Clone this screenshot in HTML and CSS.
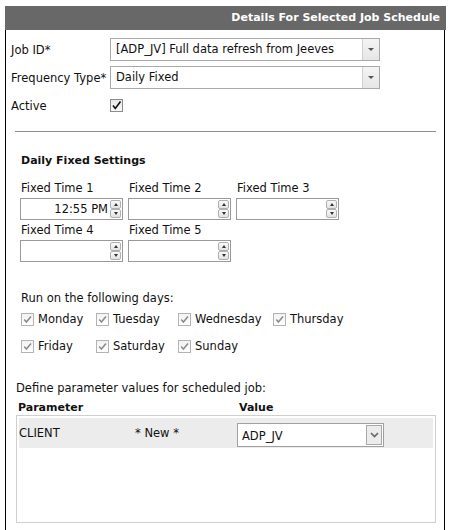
FILE: index.html
```html
<!DOCTYPE html>
<html>
<head>
<meta charset="utf-8">
<link rel="stylesheet" href="styles.css">
</head>
<body>
<div class="panel">
  <div class="panel-head">Details For Selected Job Schedule</div>
  <div class="panel-body">
    <div class="form-row">
      <span class="label">Job ID*</span>
      <div class="combo">
        <span class="combo-text">[ADP_JV] Full data refresh from Jeeves</span>
        <span class="combo-btn"><span class="tri"></span></span>
      </div>
    </div>
    <div class="form-row">
      <span class="label">Frequency Type*</span>
      <div class="combo">
        <span class="combo-text">Daily Fixed</span>
        <span class="combo-btn"><span class="tri"></span></span>
      </div>
    </div>
    <div class="form-row active-row">
      <span class="label">Active</span>
      <span class="cb cb-dark"><svg width="11" height="11" viewBox="0 0 11 11"><path d="M2 5.5 L4.3 8.5 L9.5 1.5" fill="none" stroke="#111" stroke-width="1.6"/></svg></span>
    </div>
    <div class="divider"></div>

    <div class="settings">
      <div class="section-title">Daily Fixed Settings</div>
      <div class="times">
        <div class="time">
          <div class="time-label">Fixed Time 1</div>
          <div class="spin"><span class="spin-val">12:55 PM</span><span class="spin-btns"><span class="sb"><span class="up"></span></span><span class="sb"><span class="down"></span></span></span></div>
        </div>
        <div class="time">
          <div class="time-label">Fixed Time 2</div>
          <div class="spin"><span class="spin-val"></span><span class="spin-btns"><span class="sb"><span class="up"></span></span><span class="sb"><span class="down"></span></span></span></div>
        </div>
        <div class="time">
          <div class="time-label">Fixed Time 3</div>
          <div class="spin"><span class="spin-val"></span><span class="spin-btns"><span class="sb"><span class="up"></span></span><span class="sb"><span class="down"></span></span></span></div>
        </div>
        <div class="time">
          <div class="time-label">Fixed Time 4</div>
          <div class="spin"><span class="spin-val"></span><span class="spin-btns"><span class="sb"><span class="up"></span></span><span class="sb"><span class="down"></span></span></span></div>
        </div>
        <div class="time">
          <div class="time-label">Fixed Time 5</div>
          <div class="spin"><span class="spin-val"></span><span class="spin-btns"><span class="sb"><span class="up"></span></span><span class="sb"><span class="down"></span></span></span></div>
        </div>
      </div>

      <div class="days-title">Run on the following days:</div>
      <div class="days">
        <div class="day w1"><span class="cb cb-light"><svg width="11" height="11" viewBox="0 0 11 11"><path d="M2.2 5.6 L4.4 8 L9 2.5" fill="none" stroke="#8a8a8a" stroke-width="1.5"/></svg></span>Monday</div>
        <div class="day w2"><span class="cb cb-light"><svg width="11" height="11" viewBox="0 0 11 11"><path d="M2.2 5.6 L4.4 8 L9 2.5" fill="none" stroke="#8a8a8a" stroke-width="1.5"/></svg></span>Tuesday</div>
        <div class="day w3"><span class="cb cb-light"><svg width="11" height="11" viewBox="0 0 11 11"><path d="M2.2 5.6 L4.4 8 L9 2.5" fill="none" stroke="#8a8a8a" stroke-width="1.5"/></svg></span>Wednesday</div>
        <div class="day"><span class="cb cb-light"><svg width="11" height="11" viewBox="0 0 11 11"><path d="M2.2 5.6 L4.4 8 L9 2.5" fill="none" stroke="#8a8a8a" stroke-width="1.5"/></svg></span>Thursday</div>
      </div>
      <div class="days">
        <div class="day w1"><span class="cb cb-light"><svg width="11" height="11" viewBox="0 0 11 11"><path d="M2.2 5.6 L4.4 8 L9 2.5" fill="none" stroke="#8a8a8a" stroke-width="1.5"/></svg></span>Friday</div>
        <div class="day w2"><span class="cb cb-light"><svg width="11" height="11" viewBox="0 0 11 11"><path d="M2.2 5.6 L4.4 8 L9 2.5" fill="none" stroke="#8a8a8a" stroke-width="1.5"/></svg></span>Saturday</div>
        <div class="day w3"><span class="cb cb-light"><svg width="11" height="11" viewBox="0 0 11 11"><path d="M2.2 5.6 L4.4 8 L9 2.5" fill="none" stroke="#8a8a8a" stroke-width="1.5"/></svg></span>Sunday</div>
      </div>
    </div>

    <div class="params-title">Define parameter values for scheduled job:</div>
    <div class="params-head">
      <span class="ph-param">Parameter</span>
      <span class="ph-value">Value</span>
    </div>
    <div class="params-box">
      <div class="param-row">
        <span class="pr-name">CLIENT</span>
        <span class="pr-new">* New *</span>
        <div class="vsel">
          <span class="vsel-text">ADP_JV</span>
          <span class="vsel-btn"><svg width="9" height="6" viewBox="0 0 9 6"><path d="M1 1 L4.5 4.5 L8 1" fill="none" stroke="#666" stroke-width="1.6"/></svg></span>
        </div>
      </div>
    </div>
  </div>
</div>
</body>
</html>
```
FILE: styles.css
```css
html, body {
  margin: 0;
  padding: 0;
  background: #fff;
}
body {
  font-family: "DejaVu Sans", Verdana, sans-serif;
  font-size: 11.5px;
  color: #111;
}
.panel {
  margin: 6px 0 0 5px;
  width: 441px;
}
.panel-head {
  height: 24px;
  background: #686868;
  color: #fff;
  font-weight: bold;
  font-size: 11px;
  text-align: right;
  padding-right: 6px;
  line-height: 24px;
}
.panel-body {
  border-left: 1px solid #000;
  border-right: 1px solid #000;
  height: 500px;
  padding: 8px 0 0 0;
  box-sizing: border-box;
  width: 440px;
}
.form-row {
  display: flex;
  align-items: center;
  height: 23px;
  margin-bottom: 5px;
}
.label {
  width: 99px;
  padding-left: 5px;
  flex: none;
}
.combo {
  width: 270px;
  height: 23px;
  box-sizing: border-box;
  border: 1px solid #a9a9a9;
  display: flex;
  background: #fff;
}
.combo-text {
  flex: 1;
  padding-left: 5px;
  line-height: 21px;
}
.combo-btn {
  width: 16px;
  border-left: 1px solid #d0d0d0;
  background: linear-gradient(#f4f4f4, #e6e6e6);
  display: flex;
  align-items: center;
  justify-content: center;
}
.tri {
  width: 0;
  height: 0;
  border-left: 3px solid transparent;
  border-right: 3px solid transparent;
  border-top: 3px solid #555;
}
.active-row {
  margin-top: 1px;
}
.cb {
  width: 13px;
  height: 13px;
  box-sizing: border-box;
  display: inline-flex;
  align-items: center;
  justify-content: center;
  flex: none;
}
.cb-dark {
  border: 1px solid #8c8c8c;
  background: linear-gradient(#e8e8e8, #fafafa);
}
.cb-light {
  border: 1px solid #b4b4b4;
  background: linear-gradient(#f2f2f2, #fff);
  margin-right: 4px;
}
.divider {
  margin: 14px 0 0 9px;
  width: 421px;
  height: 1px;
  background: #8f8f8f;
}
.settings {
  padding-left: 15px;
}
.section-title {
  font-weight: bold;
  font-size: 11px;
  margin-top: 22px;
  height: 14px;
  line-height: 14px;
}
.times {
  display: grid;
  grid-template-columns: repeat(3, 103px);
  column-gap: 5px;
  margin-top: 13px;
  margin-left: -1px;
}
.time-label {
  height: 14px;
  line-height: 14px;
  padding-left: 1px;
  margin-bottom: 3px;
}
.spin {
  height: 22px;
  box-sizing: border-box;
  border: 1px solid #9a9a9a;
  display: flex;
  margin-bottom: 3px;
}
.spin-val {
  flex: 1;
  text-align: right;
  line-height: 20px;
  padding-right: 2px;
}
.spin-btns {
  width: 11px;
  display: flex;
  flex-direction: column;
  justify-content: center;
  gap: 0;
  padding-right: 1px;
}
.sb {
  height: 7px;
  border: 1px solid #b0b0b0;
  border-radius: 2px;
  background: linear-gradient(#fafafa, #e2e2e2);
  display: flex;
  align-items: center;
  justify-content: center;
}
.up {
  width: 0;
  height: 0;
  border-left: 2.5px solid transparent;
  border-right: 2.5px solid transparent;
  border-bottom: 3px solid #333;
}
.down {
  width: 0;
  height: 0;
  border-left: 2.5px solid transparent;
  border-right: 2.5px solid transparent;
  border-top: 3px solid #333;
}
.days-title {
  margin-top: 26px;
  height: 14px;
  line-height: 14px;
}
.days {
  display: flex;
  height: 14px;
  align-items: center;
  margin-top: 7px;
}
.days + .days {
  margin-top: 13px;
}
.day {
  display: flex;
  align-items: center;
  flex: none;
}
.w1 { width: 75px; }
.w2 { width: 82px; }
.w3 { width: 95px; }
.params-title {
  margin-top: 28px;
  padding-left: 10px;
  height: 14px;
  line-height: 14px;
}
.params-head {
  display: flex;
  font-weight: bold;
  font-size: 11px;
  margin-top: 6px;
  height: 14px;
  line-height: 14px;
  padding-left: 12px;
}
.ph-param {
  width: 221px;
}
.params-box {
  margin: 0 0 0 10px;
  width: 420px;
  height: 108px;
  box-sizing: border-box;
  border: 1px solid #cfcfcf;
  padding: 2px;
}
.param-row {
  background: #ececec;
  height: 30px;
  display: flex;
  align-items: center;
}
.pr-name {
  width: 116px;
}
.pr-new {
  width: 102px;
}
.vsel {
  width: 147px;
  height: 24px;
  box-sizing: border-box;
  border: 1px solid #a0a0a0;
  background: #fff;
  display: flex;
  align-items: center;
  margin-top: 4px;
}
.vsel-text {
  flex: 1;
  padding-left: 4px;
  padding-top: 2px;
}
.vsel-btn {
  width: 16px;
  height: 20px;
  box-sizing: border-box;
  border: 1px solid #a8a8a8;
  background: #ececec;
  margin-right: 1px;
  display: flex;
  align-items: center;
  justify-content: center;
}
```
